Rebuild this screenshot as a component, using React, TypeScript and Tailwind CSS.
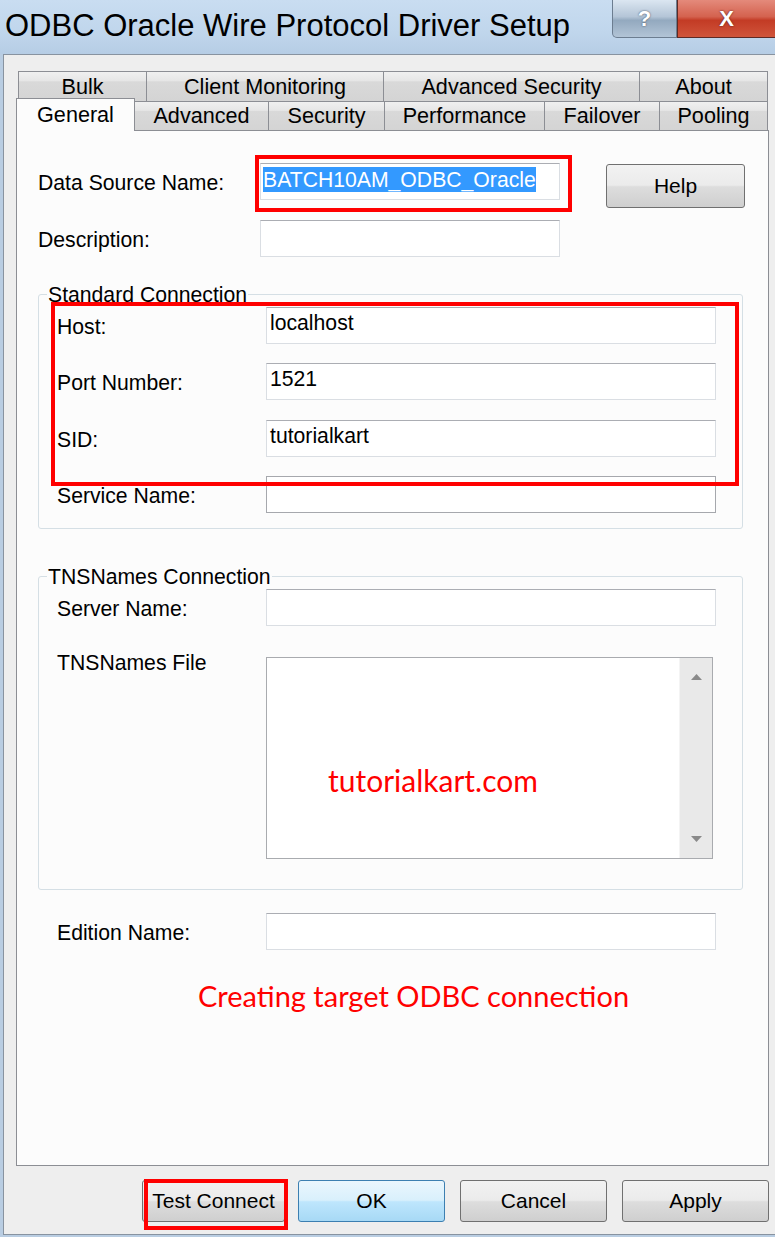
import React from 'react'

const ROW1 = [
  { label: 'Bulk', w: 'w-[129px]' },
  { label: 'Client Monitoring', w: 'w-[238px]' },
  { label: 'Advanced Security', w: 'w-[257px]' },
  { label: 'About', w: 'w-[129px]' },
]

const ROW2 = [
  { label: 'Advanced', w: 'w-[135px]' },
  { label: 'Security', w: 'w-[117px]' },
  { label: 'Performance', w: 'w-[161px]' },
  { label: 'Failover', w: 'w-[116px]' },
  { label: 'Pooling', w: 'w-[109px]' },
]

const TAB_BG =
  'bg-[linear-gradient(180deg,#f0f0f0_0%,#e6e6e6_30%,#d9d9d9_34%,#d4d4d4_100%)]'

function Tab({ label, w, h }: { label: string; w: string; h: string }) {
  return (
    <div
      className={`${w} ${h} -ml-px first:ml-0 flex items-center justify-center border border-b-0 border-[#8c8e94] ${TAB_BG} text-[21.6px] leading-[24px]`}
    >
      {label}
    </div>
  )
}

function TextBox({ w, value, dark }: { w: string; value?: string; dark?: boolean }) {
  return (
    <div
      className={`${w} h-[37px] shrink-0 border bg-white pl-[3px] pt-[3px] leading-[24px] ${
        dark ? 'border-[#a6a8ad]' : 'border-[#dadee3] border-t-[#abadb3]'
      }`}
    >
      {value}
    </div>
  )
}

function Row({ label, value, dark, className = '' }: { label: string; value?: string; dark?: boolean; className?: string }) {
  return (
    <div className={`flex h-[37px] ${className}`}>
      <div className="w-[209px] shrink-0 flex items-center pt-[2px]">{label}</div>
      <TextBox w="w-[450px]" value={value} dark={dark} />
    </div>
  )
}

function Group({ title, className = '', children }: { title: string; className?: string; children: React.ReactNode }) {
  return (
    <div className={`ml-[21px] w-[705px] rounded-[3px] border border-[#d5dfe5] pl-[18px] ${className}`}>
      <div className="-mt-[12px] -ml-[10px] w-fit bg-[#fcfcfc] px-px leading-[24px]">{title}</div>
      {children}
    </div>
  )
}

function WinButton({ children, w, h = 'h-[42px]', blue }: { children: React.ReactNode; w: string; h?: string; blue?: boolean }) {
  return (
    <div
      className={`${w} ${h} shrink-0 flex items-center justify-center rounded-[3px] border text-[21px] ${
        blue
          ? 'border-[#3c7fb1] bg-[linear-gradient(180deg,#eaf6fd_0%,#d9f0fc_48%,#bee6fd_52%,#a7d9f5_100%)]'
          : 'border-[#707070] bg-[linear-gradient(180deg,#f2f2f2_0%,#ebebeb_48%,#dddddd_52%,#cfcfcf_100%)]'
      }`}
    >
      {children}
    </div>
  )
}

function Triangle({ up }: { up?: boolean }) {
  return (
    <svg width="11" height="6" viewBox="0 0 11 6">
      <path d={up ? 'M0 6 L5.5 0 L11 6 Z' : 'M0 0 L5.5 6 L11 0 Z'} fill="#8a8a8a" />
    </svg>
  )
}

export default function App() {
  return (
    <div className="relative h-[1237px] w-[775px] overflow-hidden bg-[#b9cde2] font-['Liberation_Sans',Arial,sans-serif] text-black">
      {/* title bar */}
      <div className="flex h-[54px] items-start bg-[linear-gradient(180deg,#c9ddf1_0%,#c0d6ec_60%,#b6cde5_100%)]">
        <div className="flex-1 whitespace-nowrap pl-[5px] pt-[8px] text-[31px] leading-[36px]">
          ODBC Oracle Wire Protocol Driver Setup
        </div>
        <div className="flex h-[38px] w-[65px] items-center justify-center rounded-bl-[5px] border border-t-0 border-[#6c7d90] bg-[linear-gradient(180deg,#dbe6f1_0%,#b4c5d7_45%,#93a9bf_55%,#b2c4d6_100%)] text-[22px] font-bold text-white [text-shadow:0_0_2px_#3a4656]">
          ?
        </div>
        <div className="flex h-[38px] w-[98px] items-center justify-center border border-t-0 border-r-0 border-[#5e2a25] bg-[linear-gradient(180deg,#e48a7b_0%,#d4624f_45%,#c33b25_55%,#d0553b_100%)] text-[22px] font-bold text-white [text-shadow:0_0_2px_#4a1a14]">
          X
        </div>
      </div>

      {/* dialog body */}
      <div className="ml-[3px] h-[1181px] border-b border-l border-t border-[#8893a0] bg-[#eeeeee] pl-[12px] pt-[16px]">
        {/* tabs */}
        <div className="ml-[2px] flex h-[30px]">
          {ROW1.map((t) => (
            <Tab key={t.label} label={t.label} w={t.w} h="h-[30px]" />
          ))}
        </div>
        <div className="-mt-[3px] flex h-[32px] items-end">
          <div className="relative z-10 -mb-px flex h-[33px] w-[119px] items-center justify-center border border-b-0 border-[#8c8e94] bg-[#fcfcfc] text-[21.6px] leading-[24px]">
            General
          </div>
          {ROW2.map((t) => (
            <Tab key={t.label} label={t.label} w={t.w} h="h-[29px]" />
          ))}
        </div>

        {/* panel */}
        <div className="h-[1036px] w-[753px] border border-[#8c8e94] bg-[#fcfcfc] pt-[32px] text-[21.2px] leading-[24px]">
          <div className="flex h-[37px] pl-[21px]">
            <div className="flex w-[222px] shrink-0 items-center pt-[3px]">Data Source Name:</div>
            <div className="h-[37px] w-[300px] shrink-0 border border-[#dadee3] border-t-[#abadb3] bg-white pl-[2px] pt-[3px]">
              <span className="inline-block h-[25px] bg-[#3399ff] leading-[25px] text-white">BATCH10AM_ODBC_Oracle</span>
            </div>
            <div className="ml-[46px] mt-px">
              <WinButton w="w-[139px]" h="h-[44px]">
                Help
              </WinButton>
            </div>
          </div>

          <div className="mt-[20px] flex h-[37px] pl-[21px]">
            <div className="flex w-[222px] shrink-0 items-center pt-[2px]">Description:</div>
            <TextBox w="w-[300px]" />
          </div>

          <Group title="Standard Connection" className="mt-[37px] pb-[15px]">
            <Row label="Host:" value="localhost" />
            <Row label="Port Number:" value="1521" className="mt-[19px]" />
            <Row label="SID:" value="tutorialkart" className="mt-[20px]" />
            <Row label="Service Name:" dark className="mt-[19px]" />
          </Group>

          <Group title="TNSNames Connection" className="mt-[47px] pb-[30px]">
            <Row label="Server Name:" />
            <div className="mt-[25px] flex items-start">
              <div className="w-[209px] shrink-0 leading-[24px]">TNSNames File</div>
              <div className="mt-[6px] flex h-[202px] w-[447px] shrink-0 border border-[#a9abaf] bg-white">
                <div className="flex-1 pl-[61px] pt-[104px] font-['Lato','Open_Sans',sans-serif] text-[30px] leading-[36px] text-[#ff0000]">
                  tutorialkart.com
                </div>
                <div className="flex w-[33px] flex-col items-center justify-between border-l border-[#f4f4f4] bg-[#e9e9e9] py-[16px]">
                  <Triangle up />
                  <Triangle />
                </div>
              </div>
            </div>
          </Group>

          <div className="mt-[23px] flex h-[37px] pl-[40px]">
            <div className="flex w-[209px] shrink-0 items-center pt-[2px]">Edition Name:</div>
            <TextBox w="w-[450px]" />
          </div>

          <div className="mt-[28px] pl-[181px] font-['Lato','Open_Sans',sans-serif] text-[29px] leading-[36px] text-[#ff0000]">
            Creating target ODBC connection
          </div>
        </div>

        {/* buttons */}
        <div className="ml-[126px] mt-[14px] flex">
          <WinButton w="w-[143px]">Test Connect</WinButton>
          <div className="ml-[13px]">
            <WinButton w="w-[147px]" blue>
              OK
            </WinButton>
          </div>
          <div className="ml-[15px]">
            <WinButton w="w-[147px]">Cancel</WinButton>
          </div>
          <div className="ml-[15px]">
            <WinButton w="w-[147px]">Apply</WinButton>
          </div>
        </div>
      </div>

      {/* red annotation boxes */}
      <div className="absolute left-[255px] top-[155px] h-[57px] w-[317px] border-4 border-[#ff0000]" />
      <div className="absolute left-[51px] top-[302px] h-[184px] w-[688px] border-4 border-[#ff0000]" />
      <div className="absolute left-[144px] top-[1179px] h-[51px] w-[144px] border-4 border-[#ff0000]" />
    </div>
  )
}
